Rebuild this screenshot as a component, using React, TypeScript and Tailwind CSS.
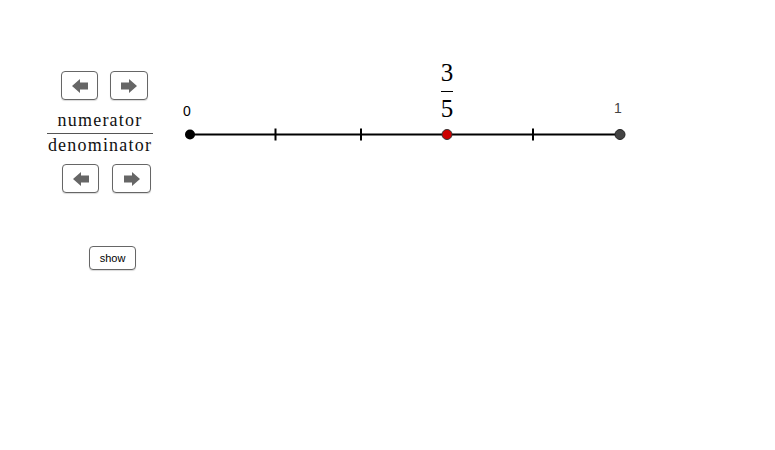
import React from 'react';

type Dir = 'left' | 'right';

function Arrow({ dir }: { dir: Dir }) {
  // block arrow: triangle head + square shaft
  const pts =
    dir === 'left'
      ? '0,7 8,0 8,3.5 16,3.5 16,10.5 8,10.5 8,14'
      : '16,7 8,0 8,3.5 0,3.5 0,10.5 8,10.5 8,14';
  return (
    <svg width="16" height="14" viewBox="0 0 16 14" className="block">
      <polygon points={pts} fill="#666666" />
    </svg>
  );
}

function ArrowButton({ dir, w }: { dir: Dir; w: string }) {
  return (
    <button
      className={`${w} h-[29px] flex items-center justify-center bg-white border border-[#666] rounded-[4px] shadow-[0_1px_1px_rgba(0,0,0,0.15)]`}
    >
      <Arrow dir={dir} />
    </button>
  );
}

function NumberLine() {
  // svg origin sits at page (170, 55)
  const ticks = [105.5, 191, 363];
  return (
    <svg width="470" height="100" viewBox="0 0 470 100" className="block">
      <line x1="20" y1="79.5" x2="450" y2="79.5" stroke="#000" strokeWidth="2.2" />
      {ticks.map((x) => (
        <line key={x} x1={x} y1="73.5" x2={x} y2="85.5" stroke="#000" strokeWidth="2" />
      ))}
      <text x="17" y="61" textAnchor="middle" fontFamily="'Liberation Sans', Arial, sans-serif" fontSize="14" fill="#000">
        0
      </text>
      <text x="448" y="58" textAnchor="middle" fontFamily="'Liberation Sans', Arial, sans-serif" fontSize="14" fill="#444">
        1
      </text>
      <text x="277" y="25.5" textAnchor="middle" fontFamily="'Liberation Serif', 'Times New Roman', serif" fontSize="25" fill="#000">
        3
      </text>
      <line x1="271" y1="36.5" x2="283" y2="36.5" stroke="#000" strokeWidth="1" />
      <text x="277" y="62" textAnchor="middle" fontFamily="'Liberation Serif', 'Times New Roman', serif" fontSize="25" fill="#000">
        5
      </text>
      <circle cx="20" cy="79.5" r="5" fill="#000" />
      <circle cx="277" cy="79.5" r="5" fill="#cc0000" stroke="#333" strokeWidth="1" />
      <circle cx="450" cy="79.5" r="5" fill="#444" stroke="#222" strokeWidth="1" />
    </svg>
  );
}

export default function App() {
  return (
    <div className="w-[775px] h-[450px] bg-white flex items-start overflow-hidden">
      <div className="ml-[47px] mt-[71px] w-[106px] flex flex-col shrink-0">
        <div className="flex gap-[12px] ml-[14px]">
          <ArrowButton dir="left" w="w-[37px]" />
          <ArrowButton dir="right" w="w-[38px]" />
        </div>

        <div className="mt-[10px] flex flex-col items-center font-['Liberation_Serif','Times_New_Roman',serif] text-[18px] leading-[20px] tracking-[1.2px] text-[#111]">
          <span className="h-[20px]">numerator</span>
          <div className="w-[106px] mt-[3px] border-t border-[#555]" />
          <span className="h-[20px] mt-[1px]">denominator</span>
        </div>

        <div className="flex gap-[13px] ml-[15px] mt-[9px]">
          <ArrowButton dir="left" w="w-[37px]" />
          <ArrowButton dir="right" w="w-[39px]" />
        </div>

        <button className="ml-[42px] mt-[53px] w-[47px] h-[24px] bg-white border border-[#666] rounded-[4px] shadow-[0_1px_1px_rgba(0,0,0,0.15)] font-['Liberation_Sans',Arial,sans-serif] text-[11px] text-black">
          show
        </button>
      </div>

      <div className="ml-[17px] mt-[55px] shrink-0">
        <NumberLine />
      </div>
    </div>
  );
}
